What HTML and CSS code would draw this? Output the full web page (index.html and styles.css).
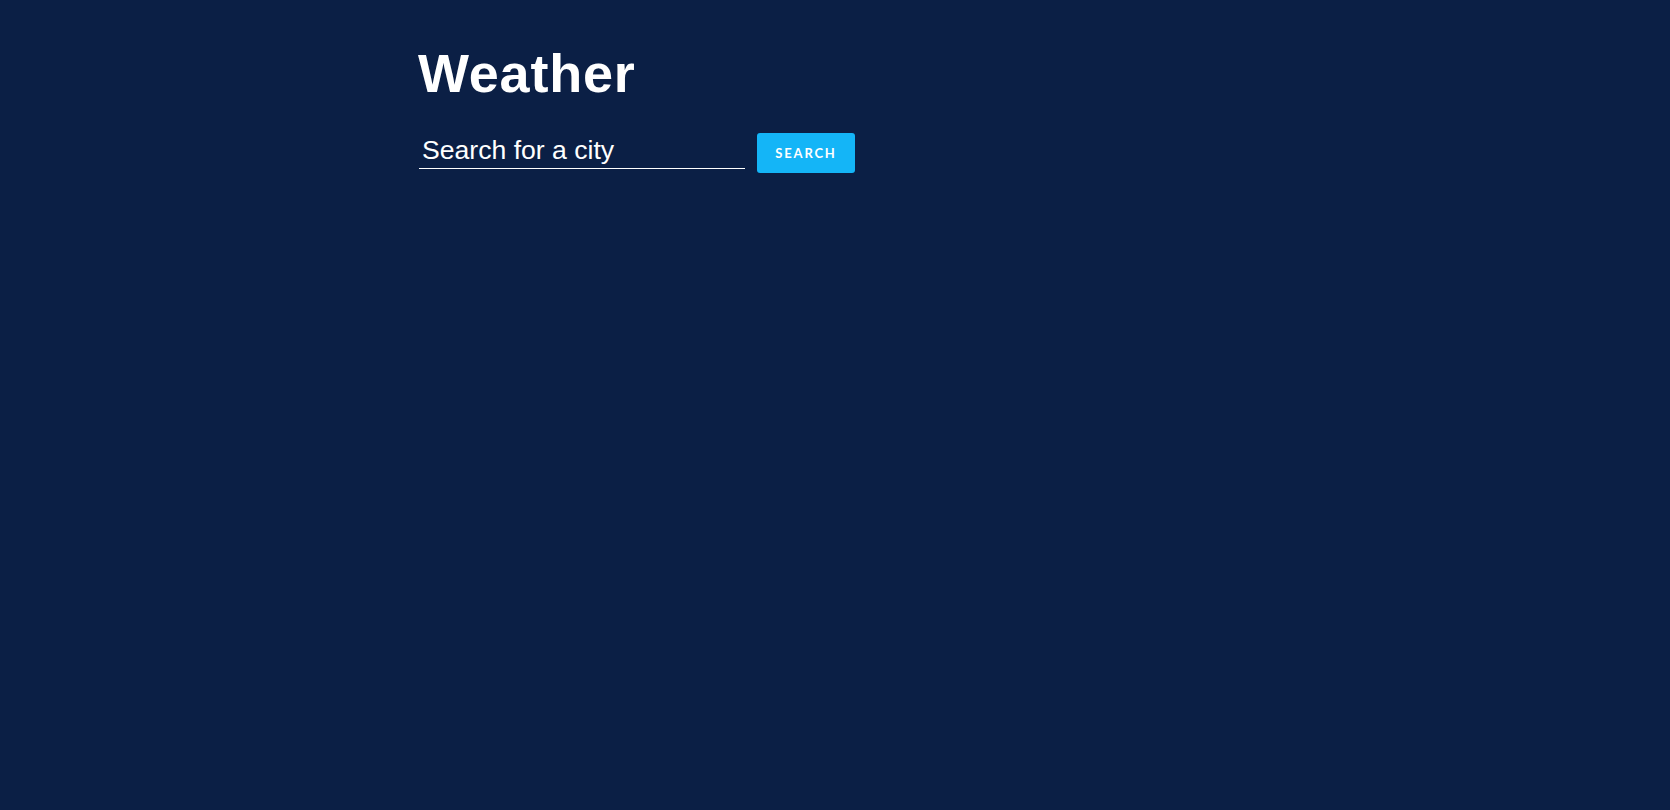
FILE: index.html
```html
<!DOCTYPE html>
<html lang="en">
<head>
<meta charset="utf-8">
<title>Weather</title>
<link rel="stylesheet" href="styles.css">
</head>
<body>
<main class="app">
  <h1 class="title">Weather</h1>
  <form class="search" onsubmit="return false">
    <input class="search-input" type="text" placeholder="Search for a city" autofocus>
    <button class="search-button" type="submit">SEARCH</button>
  </form>
</main>
</body>
</html>
```

FILE: styles.css
```css
html, body {
  margin: 0;
  padding: 0;
  height: 100%;
  background: #0b1f45;
}

body {
  font-family: "Liberation Sans", Arial, sans-serif;
  color: #ffffff;
}

.app {
  width: 834px;
  margin: 0 auto;
  padding-top: 42px;
}

.title {
  margin: 0;
  font-size: 54px;
  font-weight: 700;
  line-height: normal;
  letter-spacing: 0.8px;
  color: #ffffff;
}

.search {
  display: flex;
  align-items: flex-start;
  margin-top: 29px;
}

.search-input {
  width: 326px;
  box-sizing: border-box;
  margin: 1px 0 0 1px;
  padding: 1px 3px 2px;
  font-family: "Liberation Sans", Arial, sans-serif;
  font-size: 26.6px;
  line-height: normal;
  color: #ffffff;
  caret-color: #ffffff;
  background: transparent;
  border: none;
  border-bottom: 1px solid #ffffff;
  outline: none;
}

.search-input::placeholder {
  color: #ffffff;
  opacity: 1;
}

.search-button {
  margin-left: 12px;
  width: 98px;
  height: 40px;
  padding: 0;
  border: none;
  border-radius: 3px;
  background: #14b5f7;
  color: #ffffff;
  font-family: Lato, "Open Sans", sans-serif;
  font-weight: 700;
  font-size: 13px;
  letter-spacing: 1.8px;
  cursor: pointer;
}
```
